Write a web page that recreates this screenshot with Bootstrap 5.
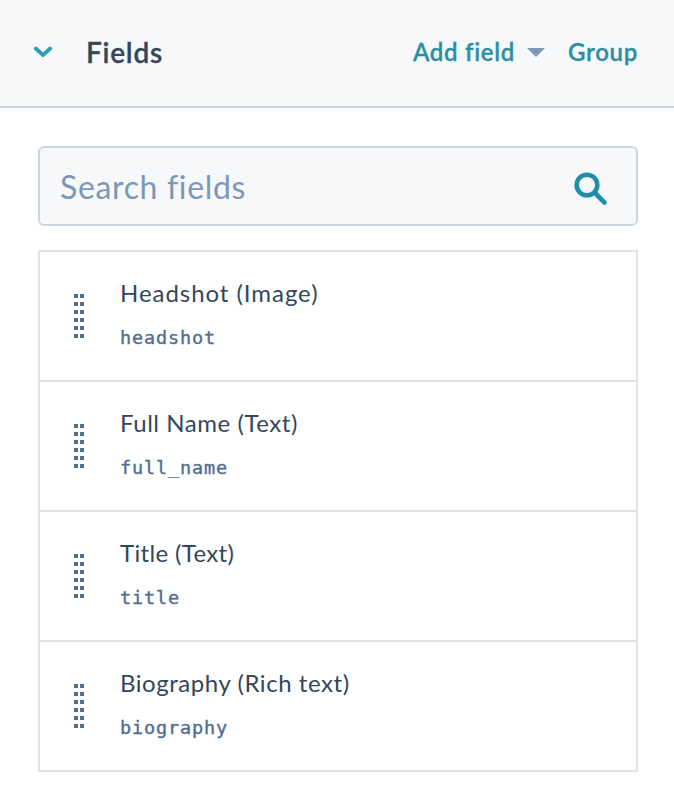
<!DOCTYPE html>
<html lang="en">
<head>
<meta charset="utf-8">
<meta name="viewport" content="width=device-width, initial-scale=1">
<title>Fields</title>
<link href="https://cdn.jsdelivr.net/npm/bootstrap@5.3.0/dist/css/bootstrap.min.css" rel="stylesheet">
<style>
body { font-family: Lato, "Open Sans", sans-serif; color: #33475b; font-size: 24px; line-height: 36px; }
.panel-head { height: 108px; background: #f6f8fa; border-bottom: 2px solid #cbd6e2; padding: 0 36px 2px 33px; }
.panel-title { font-size: 28px; line-height: 36px; font-weight: 600; letter-spacing: .75px; margin: 0 0 0 33px; -webkit-text-stroke: .3px currentColor; }
.action { color: #2a8fa5; font-weight: 600; letter-spacing: .7px; text-decoration: none; -webkit-text-stroke: .3px currentColor; }
.caret-icon { margin: 0 23px 0 12px; }
.panel-body { padding: 38px 36px 0 38px; }
.search-box { height: 80px; background: #f6f8fa; border: 2px solid #cbd6e2; border-radius: 6px; padding: 2px 28px 0 20px; }
.search-box input, .search-box input:focus { font-size: 32px; line-height: 40px; letter-spacing: .65px; color: #33475b; }
.search-box input::placeholder { color: #7c98b6; opacity: 1; }
.search-box svg { margin-top: 4px; }
.field-list { margin-top: 24px; border: 2px solid #dfe2e6; }
.field-row { height: 130px; padding: 23px 34px 0; }
.field-row + .field-row { border-top: 2px solid #dfe2e6; }
.field-row:first-child { height: 128px; }
.grip { margin-top: 19px; }
.field-text { margin-left: 36px; }
.field-name { letter-spacing: .55px; }
.field-name.wide { letter-spacing: .95px; }
.field-name.snug { letter-spacing: .35px; }
.field-code { font: 18.5px/24px "DejaVu Sans Mono", monospace; letter-spacing: .86px; color: #516f90; margin-top: 15px; -webkit-text-stroke: .4px #516f90; }
</style>
</head>
<body class="bg-white">
<svg class="d-none"><symbol id="grip" viewBox="0 0 10 44"><path fill="#516f90" d="M0 0h4v4H0zM6 0h4v4H6zM0 8h4v4H0zM6 8h4v4H6zM0 16h4v4H0zM6 16h4v4H6zM0 24h4v4H0zM6 24h4v4H6zM0 32h4v4H0zM6 32h4v4H6zM0 40h4v4H0zM6 40h4v4H6z"/></symbol></svg>
<header class="panel-head d-flex align-items-center">
  <svg width="20" height="12" viewBox="0 0 20 12" fill="none" stroke="#2e9db3" stroke-width="3.8" stroke-linecap="round" stroke-linejoin="round"><path d="M2.800 2.500l7.200 6.500 7.200-6.500"/></svg>
  <h1 class="panel-title">Fields</h1>
  <a href="#" class="action ms-auto">Add field</a>
  <svg class="caret-icon" width="18" height="9" viewBox="0 0 18 9"><path d="M0 0h18L9 9z" fill="#7c98b6"/></svg>
  <a href="#" class="action">Group</a>
</header>
<main class="panel-body">
  <div class="search-box d-flex align-items-center">
    <input type="text" class="form-control border-0 bg-transparent p-0 shadow-none" placeholder="Search fields" aria-label="Search fields">
    <svg class="flex-shrink-0" width="34" height="34" viewBox="0 0 34 34" fill="none" stroke="#1f8ea8" stroke-width="4.600" stroke-linecap="round"><circle cx="13" cy="13" r="10.300"/><path d="M21 21l9.500 9.500"/></svg>
  </div>
  <div class="field-list">
    <div class="field-row d-flex align-items-start">
      <svg class="grip" width="10" height="44"><use href="#grip"/></svg>
      <div class="field-text"><div class="field-name wide">Headshot (Image)</div><div class="field-code">headshot</div></div>
    </div>
    <div class="field-row d-flex align-items-start">
      <svg class="grip" width="10" height="44"><use href="#grip"/></svg>
      <div class="field-text"><div class="field-name">Full Name (Text)</div><div class="field-code">full_name</div></div>
    </div>
    <div class="field-row d-flex align-items-start">
      <svg class="grip" width="10" height="44"><use href="#grip"/></svg>
      <div class="field-text"><div class="field-name snug">Title (Text)</div><div class="field-code">title</div></div>
    </div>
    <div class="field-row d-flex align-items-start">
      <svg class="grip" width="10" height="44"><use href="#grip"/></svg>
      <div class="field-text"><div class="field-name">Biography (Rich text)</div><div class="field-code">biography</div></div>
    </div>
  </div>
</main>
<script src="https://cdn.jsdelivr.net/npm/bootstrap@5.3.0/dist/js/bootstrap.bundle.min.js"></script>
</body>
</html>
